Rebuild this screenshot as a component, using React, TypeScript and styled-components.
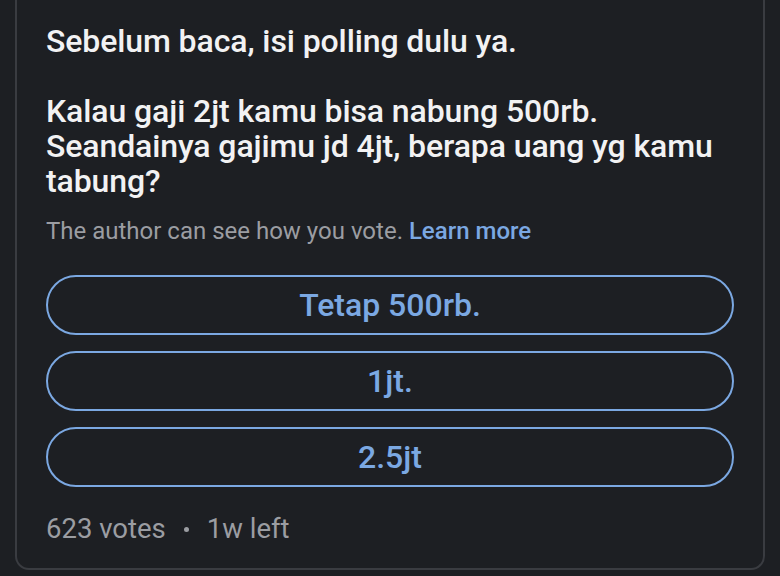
import React from "react";
import styled, { createGlobalStyle } from "styled-components";

const Global = createGlobalStyle`
  html, body { margin: 0; padding: 0; background: #1d1f23; }
  body { font-family: Roboto, "Liberation Sans", sans-serif; -webkit-font-smoothing: antialiased; }
`;

const Page = styled.div`
  width: 780px;
  height: 576px;
  box-sizing: border-box;
  padding: 0 15px 6px 15px;
  background: #1d1f23;
  display: flex;
  flex-direction: column;
`;

const Card = styled.div`
  flex: 1;
  box-sizing: border-box;
  border: 2px solid #3a3c41;
  border-top: none;
  border-radius: 0 0 14px 14px;
  padding: 24px 29px 0 29px;
  display: flex;
  flex-direction: column;
`;

const Question = styled.div`
  color: #f2f2f3;
  font-size: 32px;
  line-height: 35px;
  font-weight: 500;
  white-space: pre-wrap;
  letter-spacing: -0.1px;
`;

const Notice = styled.div`
  margin-top: 18px;
  color: #9b9da2;
  font-size: 24px;
  line-height: 28px;
`;

const Learn = styled.span`
  color: #7ba8e2;
  font-weight: 500;
`;

const Options = styled.div`
  margin-top: 30px;
  display: flex;
  flex-direction: column;
  gap: 16px;
`;

const Option = styled.button`
  height: 60px;
  box-sizing: border-box;
  border: 2px solid #7ba8e2;
  border-radius: 30px;
  background: transparent;
  color: #7ba8e2;
  font-family: Roboto, "Liberation Sans", sans-serif;
  font-size: 32px;
  font-weight: 500;
  display: flex;
  align-items: center;
  justify-content: center;
  padding: 0;
`;

const Footer = styled.div`
  margin-top: 27px;
  color: #9b9da2;
  font-size: 27.5px;
  line-height: 30px;
  display: flex;
  align-items: center;
  gap: 18px;
`;

const Dot = styled.span`
  width: 5px;
  height: 5px;
  border-radius: 50%;
  background: #9b9da2;
`;

const options = ["Tetap 500rb.", "1jt.", "2.5jt"];

export default function App() {
  return (
    <>
      <Global />
      <Page>
        <Card>
          <Question>
            {"Sebelum baca, isi polling dulu ya.\n\nKalau gaji 2jt kamu bisa nabung 500rb.\nSeandainya gajimu jd 4jt, berapa uang yg kamu\ntabung?"}
          </Question>
          <Notice>
            The author can see how you vote. <Learn>Learn more</Learn>
          </Notice>
          <Options>
            {options.map((o) => (
              <Option key={o}>{o}</Option>
            ))}
          </Options>
          <Footer>
            <span>623 votes</span>
            <Dot />
            <span>1w left</span>
          </Footer>
        </Card>
      </Page>
    </>
  );
}
